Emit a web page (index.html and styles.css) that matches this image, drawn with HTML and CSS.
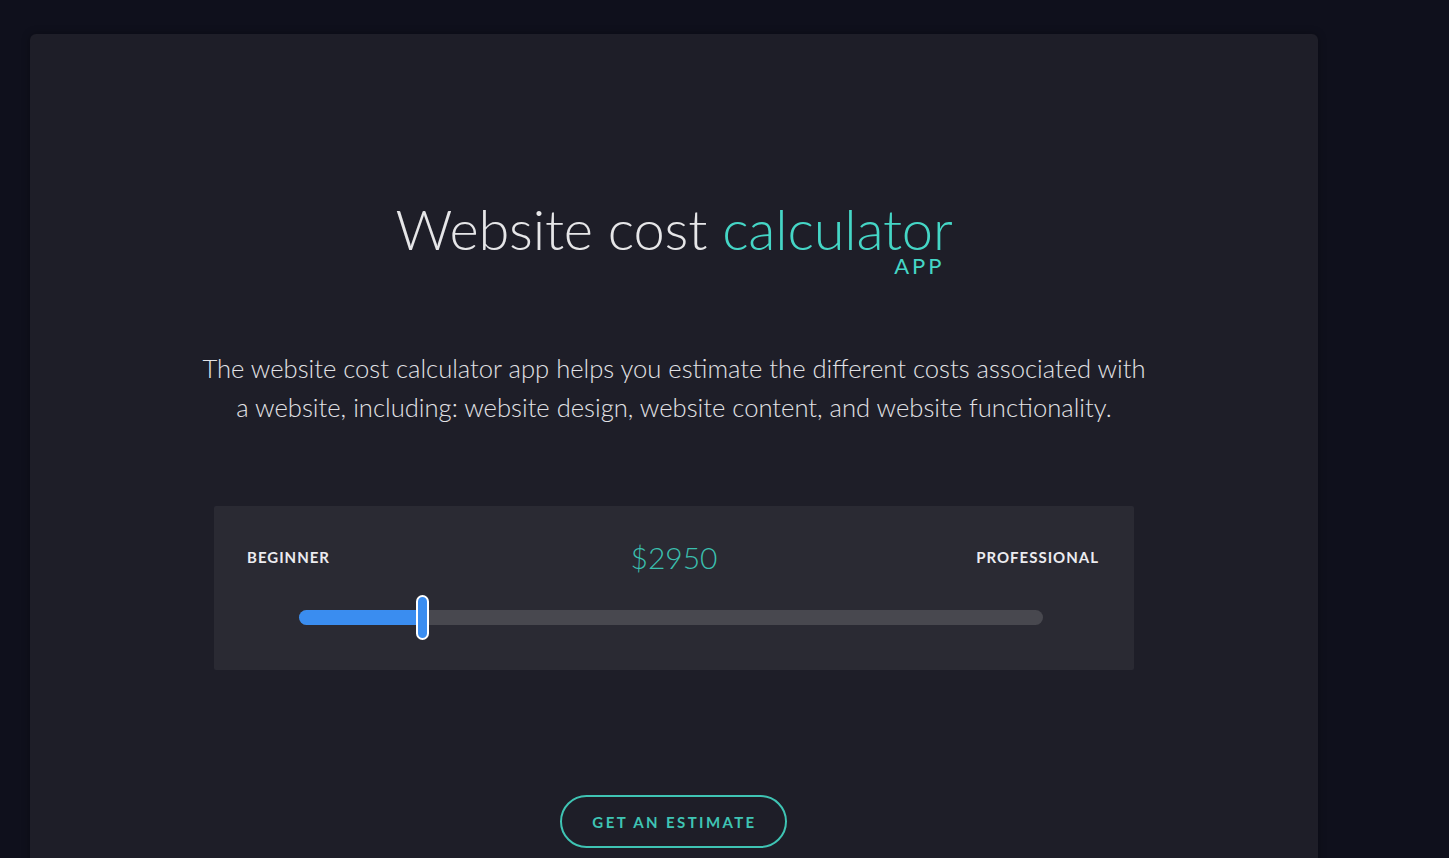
FILE: index.html
```html
<!DOCTYPE html>
<html lang="en">
<head>
<meta charset="utf-8">
<title>Website cost calculator</title>
<link rel="stylesheet" href="styles.css">
</head>
<body>
<main class="card">
  <header class="hero">
    <h1 class="title">Website cost <span class="accent">calculator</span></h1>
    <span class="app">APP</span>
  </header>
  <p class="intro">The website cost calculator app helps you estimate the different costs associated with a website, including: website design, website content, and website functionality.</p>
  <section class="panel">
    <div class="panel-head">
      <span class="level">BEGINNER</span>
      <span class="price">$2950</span>
      <span class="level level-end">PROFESSIONAL</span>
    </div>
    <div class="slider">
      <div class="track">
        <div class="fill" style="width:16.5%"></div>
        <div class="thumb" style="left:16.5%"></div>
      </div>
    </div>
  </section>
  <div class="actions">
    <button class="btn">GET AN ESTIMATE</button>
  </div>
</main>
</body>
</html>
```
FILE: styles.css
```css
html, body {
  margin: 0;
  padding: 0;
  background: #0f101c;
  height: 100%;
  overflow: hidden;
}
body {
  font-family: Lato, "Open Sans", sans-serif;
  color: #e6e6e8;
  padding: 34px 0 0 30px;
  box-sizing: border-box;
}
.card {
  width: 1288px;
  height: 900px;
  background: #1e1e28;
  border-radius: 6px;
  display: flex;
  flex-direction: column;
  align-items: center;
  box-shadow: 0 0 8px rgba(0,0,0,0.3);
}
.hero {
  padding-top: 173px;
  display: flex;
  flex-direction: column;
  align-items: flex-end;
}
.title {
  margin: 0;
  font-weight: 300;
  font-size: 56px;
  line-height: 44px;
  height: 44px;
  color: #e6e6e8;
  letter-spacing: -0.2px;
}
.accent {
  color: #45d6c6;
}
.app {
  display: block;
  margin: 5px 8px 4px 0;
  font-size: 22px;
  line-height: 20px;
  font-weight: 400;
  letter-spacing: 3px;
  color: #45d6c6;
}
.intro {
  margin: 69px 0 0;
  width: 960px;
  text-align: center;
  font-size: 25.6px;
  font-weight: 300;
  line-height: 39px;
  color: #e2e2e6;
}
.panel {
  margin-top: 79px;
  width: 920px;
  height: 164px;
  background: #2a2a33;
  border-radius: 2px;
  padding: 33px 35px 0 33px;
  box-sizing: border-box;
}
.panel-head {
  display: grid;
  grid-template-columns: 1fr auto 1fr;
  align-items: center;
  height: 30px;
}
.level {
  font-size: 15px;
  font-weight: 700;
  letter-spacing: 1px;
  color: #ececf0;
}
.level-end {
  text-align: right;
}
.price {
  font-size: 30px;
  font-weight: 300;
  color: #3bbfae;
  padding-left: 2px;
}
.slider {
  padding: 41px 56px 0 52px;
}
.track {
  position: relative;
  height: 15px;
  border-radius: 8px;
  background: #48484f;
}
.fill {
  height: 100%;
  background: #3a8df0;
  border-radius: 8px 0 0 8px;
}
.thumb {
  position: absolute;
  top: -15px;
  width: 9px;
  height: 41px;
  margin-left: -6px;
  background: #3a8df0;
  border: 2px solid #ffffff;
  border-radius: 7px;
}
.actions {
  margin-top: 125px;
}
.btn {
  font-family: Lato, sans-serif;
  font-size: 15px;
  font-weight: 700;
  letter-spacing: 2.4px;
  color: #3fc4b4;
  background: transparent;
  border: 2px solid #3fc4b4;
  border-radius: 28px;
  width: 227px;
  height: 53px;
  padding: 0 0 0 3px;
  margin-left: -2px;
  cursor: pointer;
}
```
